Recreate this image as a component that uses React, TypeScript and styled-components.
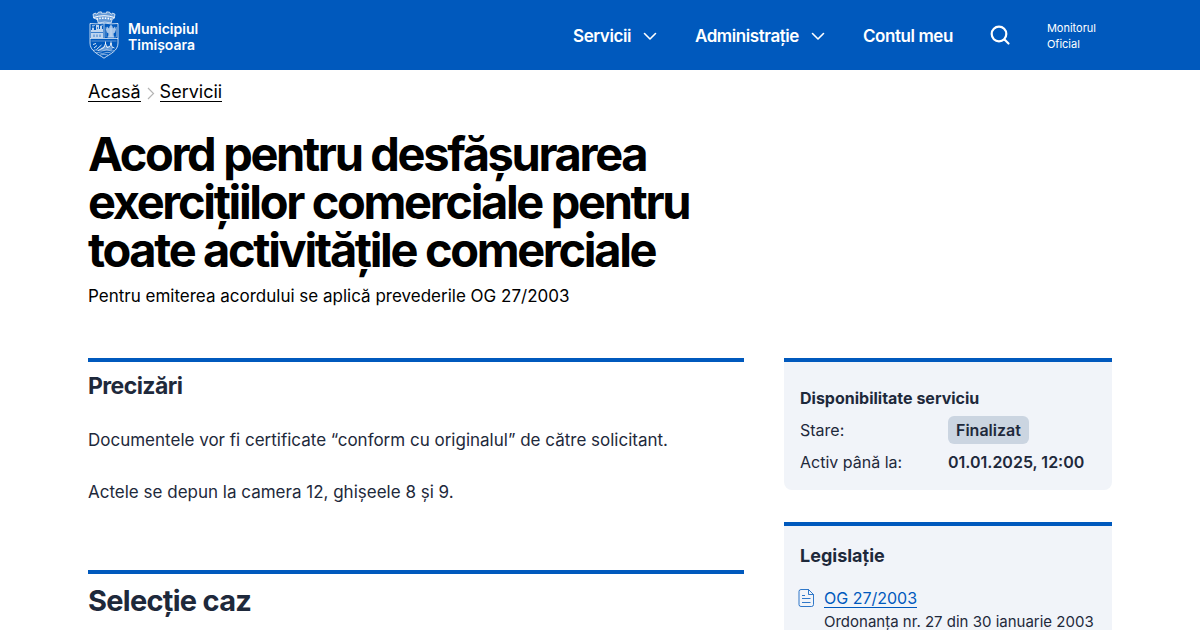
import React from "react";
import styled, { createGlobalStyle } from "styled-components";

const blue = "#0059bd";
const ink = "#1e293b";

const GlobalStyle = createGlobalStyle`
  *, *::before, *::after { box-sizing: border-box; }
  body {
    margin: 0;
    background: #fff;
    color: #000;
    font-family: Inter, "Liberation Sans", sans-serif;
    font-size: 17px;
    line-height: 28px;
  }
  h1, h2, h3, p, dl, dd, ul, ol { margin: 0; padding: 0; }
  ul, ol { list-style: none; }
`;

const Container = styled.div`
  width: 100%;
  max-width: 1056px;
  margin: 0 auto;
  padding: 0 16px;
`;

const Header = styled.header`
  background: ${blue};
  color: #fff;
`;

const HeaderBar = styled(Container)`
  display: flex;
  align-items: center;
  justify-content: space-between;
  min-height: 70px;
`;

const Brand = styled.a`
  display: flex;
  align-items: center;
  gap: 8px;
  color: inherit;
  text-decoration: none;
  font-size: 14px;
  font-weight: 600;
  line-height: 16px;
`;

const BrandName = styled.span`
  display: flex;
  flex-direction: column;
  padding-top: 4px;
`;

const Nav = styled.nav`
  display: flex;
  align-items: center;
  gap: 36px;
  padding: 2px 16px 0 0;
  font-weight: 600;
`;

const NavButton = styled.button`
  display: flex;
  align-items: center;
  gap: 10px;
  padding: 0;
  border: 0;
  background: none;
  color: inherit;
  font: inherit;
  letter-spacing: -0.025em;
  cursor: pointer;
`;

const NavLink = styled.a`
  color: inherit;
  text-decoration: none;
  letter-spacing: -0.025em;
`;

const SmallLink = styled.a`
  display: flex;
  flex-direction: column;
  color: inherit;
  text-decoration: none;
  font-size: 11px;
  font-weight: 400;
  line-height: 16px;
`;

const TextLink = styled.a`
  display: inline-block;
  color: inherit;
  text-decoration: none;
  border-bottom: 1px solid currentColor;
`;

const Crumbs = styled.ol`
  display: flex;
  align-items: center;
  padding-top: 12px;
  font-size: 18px;
  line-height: 19px;
`;

const Crumb = styled.li`
  display: flex;
  align-items: center;
`;

const Title = styled.h1`
  max-width: 656px;
  padding-top: 28px;
  font-size: 47px;
  font-weight: 700;
  line-height: 48px;
  letter-spacing: -0.05em;
`;

const Lead = styled.p`
  padding-top: 8px;
`;

const Columns = styled.div`
  display: grid;
  grid-template-columns: 2fr 1fr;
  gap: 40px;
  padding-top: 48px;
  color: ${ink};
`;

const Main = styled.div`
  display: flex;
  flex-direction: column;
  gap: 64px;
`;

const Section = styled.section`
  border-top: 4px solid ${blue};
  padding-top: 8px;
`;

const SectionTitle = styled.h2<{ $large?: boolean }>`
  font-size: ${(p) => (p.$large ? 29 : 23)}px;
  font-weight: 700;
  line-height: ${(p) => (p.$large ? 38 : 32)}px;
  letter-spacing: -0.025em;
`;

const Paragraph = styled.p`
  padding-top: 24px;
`;

const Aside = styled.aside`
  display: flex;
  flex-direction: column;
  gap: 32px;
`;

const Card = styled.section<{ $roomy?: boolean }>`
  border-top: 4px solid ${blue};
  border-radius: 0 0 8px 8px;
  background: #f1f4f9;
  padding: ${(p) => (p.$roomy ? "24px 16px 14px" : "16px")};
  font-size: 16px;
  line-height: 24px;
`;

const CardTitle = styled.h3<{ $large?: boolean }>`
  font-size: ${(p) => (p.$large ? 18 : 16)}px;
  font-weight: 700;
  line-height: ${(p) => (p.$large ? 28 : 24)}px;
`;

const Facts = styled.dl`
  display: grid;
  grid-template-columns: 148px 1fr;
  align-items: center;
  row-gap: 4px;
  padding-top: 6px;
  line-height: 28px;
`;

const FactValue = styled.dd`
  font-weight: 600;
`;

const Badge = styled.span`
  display: inline-block;
  padding: 0 8px;
  border-radius: 6px;
  background: #cbd5e1;
`;

const LawList = styled.ul`
  margin-left: -4px;
`;

const LawItem = styled.li`
  display: grid;
  grid-template-columns: 20px 1fr;
  column-gap: 8px;
  padding-top: 16px;
`;

const LawLink = styled(TextLink)`
  color: ${blue};
  line-height: 18px;
`;

const LawText = styled.p`
  font-size: 15px;
`;

const Crest = () => (
  <svg width="32" height="48" viewBox="0 0 32 48" fill="none" stroke="#fff" strokeWidth="0.7" strokeLinejoin="round" aria-hidden="true">
    {/* mural crown */}
    <path fill="#fff" fillOpacity="0.4" d="M5 3.200 7.500 2l.6 1.200 2-1 .2-1 3-.4.2 1.400h5l.2-1.400 3 .4.2 1 2 1 .6-1.200 2.500 1.200-.8 4.200-2 .8-1 3.700q-6.500-1.600-13 0l-1-3.700-3.500-1z" />
    <path strokeWidth="1" d="M5.500 6.500q10.500-3.600 21 0" />
    <path strokeDasharray="1.500 1.300" strokeWidth="1.600" d="M8.500 8.200q7.500-2.200 15 0" />
    {/* shield outline */}
    <path strokeWidth="0.9" strokeOpacity="0.85" d="M2 12.500q7 1 14-.5 7 1.500 14 .5v19.500c0 8-8 11-14 15.200C10 43 2 40 2 32z" />
    <path d="M16 12v15M2 27.500h28" />
    {/* castle quarter */}
    <path fill="#fff" fillOpacity="0.75" stroke="none" d="M3 19h1v-2h2v2h2v-5h3v4h1v-3h2v3h1v9H3z" />
    <path stroke={blue} strokeWidth="0.7" d="M3 21.500h12M6 26v-2.500M9 26v-2.500M12 26v-2.500M9.500 18v-2" />
    <path strokeOpacity="0.8" d="M4 14.500h3M4 16h2M12.500 14.300h2.500" />
    {/* winged figure quarter */}
    <path fill="#fff" fillOpacity="0.65" stroke="none" d="m23 13.500 1.500 2 .5 2 2-2 1 3-1 3-1.500 1 .5 4h-6l.5-4-1.500-1-1-3 1-3 2 2 .5-2z" />
    <path strokeWidth="0.6" strokeOpacity="0.6" d="M18 16v10M28.500 16v10M19 26h9M23 17v8" />
    {/* fortress above the waves */}
    <path strokeOpacity="0.5" d="M3.500 30h25" />
    <path strokeWidth="1" strokeOpacity="0.85" d="M6 37l3-2.500M8.500 38.500l5-4.500M10 39.500l6-3 1.500-4 1.500 4 3-1 1-3.500 1 4 2.500 1M5 33.500l3-1M17.500 30.500v3M23 30.500v3" />
    <path fill="#fff" fillOpacity="0.4" stroke="none" d="m13 37 4-2.500 4 1 4 .5-1 3.500H12z" />
    <path strokeOpacity="0.7" d="M5 39.500q3-1.300 5.500 0t5.500 0 5.500 0 4.500 0M8 42q2.500-1.200 4.500 0t4 0 6-.3M12 44q4-1.300 8 0" />
  </svg>
);

const ChevronDown = () => (
  <svg width="18" height="18" viewBox="0 0 18 18" fill="none" stroke="currentColor" strokeWidth="1.6" strokeLinecap="round" strokeLinejoin="round" aria-hidden="true">
    <path d="m3.500 6.500 5.500 5.500 5.500-5.500" />
  </svg>
);

const SearchIcon = () => (
  <svg width="22" height="24" viewBox="0 0 22 24" fill="none" stroke="currentColor" strokeWidth="2.200" strokeLinecap="round" aria-hidden="true">
    <circle cx="10" cy="10" r="7.300" />
    <path d="m15.500 15.500 4 4" />
  </svg>
);

const CrumbArrow = () => (
  <svg width="19" height="20" viewBox="1 0 19 20" fill="none" stroke="#b5b5b5" strokeWidth="1.2" aria-hidden="true">
    <path d="m8 6 5.500 5.500L8 17" />
  </svg>
);

const DocIcon = () => (
  <svg width="20" height="24" viewBox="0 0 20 24" fill="none" stroke={blue} strokeOpacity="0.8" strokeWidth="1" strokeLinejoin="round" aria-hidden="true">
    <path d="M12.500 3.500h-7.500a2 2 0 0 0-2 2v13a2 2 0 0 0 2 2h10.500a2 2 0 0 0 2-2v-10zM12.500 3.500v5h5M6 9.500h3M6 12.500h8.500M6 16.500h8.500" />
  </svg>
);

export default function App() {
  return (
    <>
      <GlobalStyle />
      <Header>
        <HeaderBar>
          <Brand href="#">
            <Crest />
            <BrandName>
              <span>Municipiul</span>
              <span>Timișoara</span>
            </BrandName>
          </Brand>
          <Nav>
            <NavButton type="button">Servicii <ChevronDown /></NavButton>
            <NavButton type="button">Administrație <ChevronDown /></NavButton>
            <NavLink href="#">Contul meu</NavLink>
            <NavButton type="button" aria-label="Caută"><SearchIcon /></NavButton>
            <SmallLink href="#"><span>Monitorul</span><span>Oficial</span></SmallLink>
          </Nav>
        </HeaderBar>
      </Header>
      <Container>
        <nav>
          <Crumbs>
            <Crumb><TextLink href="#">Acasă</TextLink><CrumbArrow /></Crumb>
            <Crumb><TextLink href="#">Servicii</TextLink></Crumb>
          </Crumbs>
        </nav>
        <Title>Acord pentru desfășurarea exercițiilor comerciale pentru toate activitățile comerciale</Title>
        <Lead>Pentru emiterea acordului se aplică prevederile OG 27/2003</Lead>
        <Columns>
          <Main>
            <Section>
              <SectionTitle>Precizări</SectionTitle>
              <Paragraph>Documentele vor fi certificate “conform cu originalul” de către solicitant.</Paragraph>
              <Paragraph>Actele se depun la camera 12, ghișeele 8 și 9.</Paragraph>
            </Section>
            <Section>
              <SectionTitle $large>Selecție caz</SectionTitle>
            </Section>
          </Main>
          <Aside>
            <Card $roomy>
              <CardTitle>Disponibilitate serviciu</CardTitle>
              <Facts>
                <dt>Stare:</dt>
                <FactValue><Badge>Finalizat</Badge></FactValue>
                <dt>Activ până la:</dt>
                <FactValue>01.01.2025, 12:00</FactValue>
              </Facts>
            </Card>
            <Card>
              <CardTitle $large>Legislație</CardTitle>
              <LawList>
                <LawItem>
                  <DocIcon />
                  <div>
                    <LawLink href="#">OG 27/2003</LawLink>
                    <LawText>Ordonanța nr. 27 din 30 ianuarie 2003</LawText>
                  </div>
                </LawItem>
              </LawList>
            </Card>
          </Aside>
        </Columns>
      </Container>
    </>
  );
}
